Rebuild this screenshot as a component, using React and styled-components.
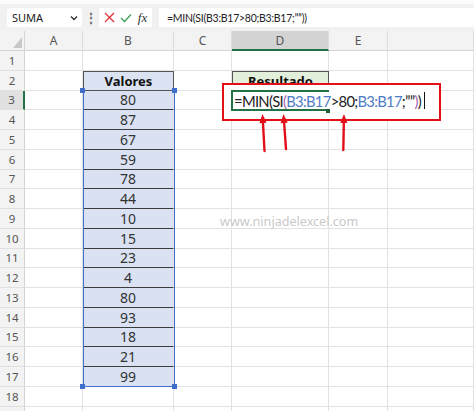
import React from 'react';
import styled, { createGlobalStyle } from 'styled-components';

const Global = createGlobalStyle`
  html, body { margin: 0; padding: 0; background: #fff; }
  body { width: 474px; height: 411px; overflow: hidden; font-family: "Noto Sans", "Open Sans", sans-serif; }
`;

const Page = styled.div`
  position: relative;
  width: 474px;
  height: 411px;
  overflow: hidden;
  background: #fff;
`;

const Toolbar = styled.div`
  height: 31px;
  box-sizing: border-box;
  border-top: 4px solid #fbfbfb;
  background: #f1f1f1;
  display: flex;
  align-items: center;
  padding-left: 7px;
`;

const NameBox = styled.div`
  width: 75px;
  height: 19px;
  box-sizing: border-box;
  background: #fff;
  border-radius: 3px;
  display: flex;
  align-items: center;
  justify-content: space-between;
  padding: 0 4px 0 5px;
  font-size: 11px;
  color: #222;
`;

const Dots = styled.div`
  width: 10px;
  margin-left: 4px;
  display: flex;
  justify-content: center;
  color: #666;
  font-size: 12px;
  font-weight: bold;
`;

const ActionBox = styled.div`
  width: 53px;
  height: 19px;
  margin-left: 3px;
  background: #fff;
  border-radius: 2px;
  display: flex;
  align-items: center;
  justify-content: space-around;
  padding: 0 2px;
  box-sizing: border-box;
`;

const Fx = styled.span`
  font-family: "Liberation Serif", "DejaVu Serif", serif;
  font-style: italic;
  font-size: 13px;
  color: #333;
`;

const FormulaInput = styled.div`
  flex: 1;
  height: 19px;
  margin-left: 7px;
  background: #fff;
  display: flex;
  align-items: center;
  padding-left: 8px;
  font-family: "Lato", "Noto Sans", sans-serif;
  font-size: 10.5px;
  letter-spacing: -0.25px;
  color: #222;
`;

const Sheet = styled.div`
  display: grid;
  grid-template-columns: 25px 58px 91px 58px 97px 59px 1fr;
  grid-template-rows: 20px repeat(19, 19.75px);
`;

const ColHead = styled.div`
  box-sizing: border-box;
  background: ${p => (p.$active ? '#d3d3d3' : '#f3f3f3')};
  border-right: 1px solid #dcdcdc;
  border-bottom: ${p => (p.$active ? '2px solid #217346' : '1px solid #d4d4d4')};
  display: flex;
  align-items: center;
  justify-content: center;
  font-size: 12px;
  color: #555;
`;

const Corner = styled.div`
  box-sizing: border-box;
  background: #f3f3f3;
  border-right: 1px solid #d4d4d4;
  border-bottom: 1px solid #d4d4d4;
  display: flex;
  align-items: flex-end;
  justify-content: flex-end;
  padding: 0 2px 2px 0;
`;

const RowHead = styled.div`
  box-sizing: border-box;
  background: ${p => (p.$active ? '#e1e1e1' : '#f3f3f3')};
  border-right: ${p => (p.$active ? '2px solid #217346' : '1px solid #d4d4d4')};
  border-bottom: 1px solid #e0e0e0;
  display: flex;
  align-items: center;
  justify-content: center;
  font-size: 11.5px;
  color: #555;
`;

const Cell = styled.div`
  box-sizing: border-box;
  border-right: 1px solid #e2e2e2;
  border-bottom: 1px solid #e2e2e2;
`;

const HeadCell = styled.div`
  box-sizing: border-box;
  background: ${p => p.$bg};
  border: 1.5px solid #555;
  display: flex;
  align-items: center;
  justify-content: center;
  font-size: 13px;
  font-weight: bold;
  color: #111;
`;

const DataCell = styled.div`
  box-sizing: border-box;
  background: #d9e1f2;
  border-bottom: 1.5px solid #3c3c3c;
  border-right: 1px solid #e2e2e2;
  display: flex;
  align-items: center;
  justify-content: center;
  font-size: 14px;
  color: #333;
`;

const Selection = styled.div`
  position: absolute;
  left: 82.5px;
  top: 90px;
  width: 92px;
  height: 297px;
  box-sizing: border-box;
  border-left: 1.5px solid #3f6fcb;
  border-right: 1.5px solid #3f6fcb;
  border-bottom: 1.5px solid #3f6fcb;
  pointer-events: none;
`;

const Handle = styled.div`
  position: absolute;
  width: 5px;
  height: 5px;
  background: #3f6fcb;
  ${p => (p.$top ? 'top: -2px;' : 'bottom: -3px;')}
  ${p => (p.$left ? 'left: -3.5px;' : 'right: -3.5px;')}
`;

const RedBox = styled.div`
  position: absolute;
  left: 222px;
  top: 83px;
  width: 219px;
  height: 38px;
  box-sizing: border-box;
  border: 2px solid #e3101a;
  background: #fff;
`;

const Editor = styled.div`
  position: absolute;
  left: 231px;
  top: 90.5px;
  width: 196px;
  height: 20px;
  display: flex;
  align-items: center;
  padding-left: 3px;
  box-sizing: border-box;
  font-family: "Lato", "Noto Sans", sans-serif;
  font-size: 14.8px;
  letter-spacing: -0.7px;
  color: #222;
  white-space: nowrap;
  background: #fff;
`;

const Tok = styled.span`
  color: ${p => p.$c || '#222'};
`;

const Caret = styled.span`
  display: inline-block;
  width: 1px;
  height: 17px;
  background: #111;
  margin-left: 3px;
`;

const ActiveCell = styled.div`
  position: absolute;
  left: 231px;
  top: 90px;
  width: 98px;
  height: 21px;
  box-sizing: border-box;
  border: 2px solid #217346;
  border-right: none;
  pointer-events: none;
`;

const FillHandle = styled.div`
  position: absolute;
  left: 326px;
  top: 108.5px;
  width: 4px;
  height: 4px;
  background: #1d5e3a;
`;

const Watermark = styled.div`
  position: absolute;
  left: 220px;
  top: 213px;
  font-size: 12.6px;
  color: #c9c9c9;
`;

const Arrows = styled.svg`
  position: absolute;
  left: 0;
  top: 0;
  pointer-events: none;
`;

const values = [80, 87, 67, 59, 78, 44, 10, 15, 23, 4, 80, 93, 18, 21, 99];
const cols = ['A', 'B', 'C', 'D', 'E', ''];

function Arrow({ x1, y1, x2, y2 }) {
  const dx = x1 - x2, dy = y1 - y2;
  const len = Math.hypot(dx, dy);
  const ux = dx / len, uy = dy / len;
  const bx = x1 - ux * 9, by = y1 - uy * 9;
  const px = -uy * 3.6, py = ux * 3.6;
  return (
    <g>
      <line x1={x2} y1={y2} x2={bx} y2={by} stroke="#e3101a" strokeWidth="2.4" strokeLinecap="round" />
      <polygon points={`${x1},${y1} ${bx + px},${by + py} ${bx - px},${by - py}`} fill="#e3101a" />
    </g>
  );
}

export default function App() {
  const rows = [];
  for (let r = 1; r <= 19; r++) {
    rows.push(<RowHead key={`rh${r}`} $active={r === 3}>{r <= 18 ? r : ''}</RowHead>);
    for (let c = 0; c < 6; c++) {
      const key = `c${r}-${c}`;
      if (c === 1 && r === 2) {
        rows.push(<HeadCell key={key} $bg="#dbe2f1">Valores</HeadCell>);
      } else if (c === 3 && r === 2) {
        rows.push(<HeadCell key={key} $bg="#e2efda">Resultado</HeadCell>);
      } else if (c === 1 && r >= 3 && r <= 17) {
        rows.push(<DataCell key={key}>{values[r - 3]}</DataCell>);
      } else {
        rows.push(<Cell key={key} />);
      }
    }
  }

  return (
    <Page>
      <Global />
      <Toolbar>
        <NameBox>
          <span>SUMA</span>
          <svg width="8" height="6" viewBox="0 0 8 6">
            <path d="M1 1.5 L4 4.5 L7 1.5" fill="none" stroke="#333" strokeWidth="1.4" />
          </svg>
        </NameBox>
        <Dots>⋮</Dots>
        <ActionBox>
          <svg width="11" height="11" viewBox="0 0 11 11">
            <path d="M1 1 L10 10 M10 1 L1 10" stroke="#e0343a" strokeWidth="1.3" />
          </svg>
          <svg width="12" height="10" viewBox="0 0 12 10">
            <path d="M1 5 L4.5 8.5 L11 1.5" fill="none" stroke="#3f9f5a" strokeWidth="1.3" />
          </svg>
          <Fx>fx</Fx>
        </ActionBox>
        <FormulaInput>=MIN(SI(B3:B17&gt;80;B3:B17;””))</FormulaInput>
      </Toolbar>
      <Sheet>
        <Corner>
          <svg width="9" height="11" viewBox="0 0 9 11">
            <polygon points="9,0 9,11 0,11" fill="#c8c8c8" />
          </svg>
        </Corner>
        {cols.map((c, i) => (
          <ColHead key={i} $active={c === 'D'}>{c}</ColHead>
        ))}
        {rows}
      </Sheet>

      <Selection>
        <Handle $top $left />
        <Handle $top />
        <Handle $left />
        <Handle />
      </Selection>

      <Watermark>www.ninjadelexcel.com</Watermark>

      <RedBox />
      <Editor>
        <Tok>=MIN(SI</Tok>
        <Tok $c="#a65fb3">(</Tok>
        <Tok $c="#4f7cc4">B3:B17</Tok>
        <Tok>&gt;80;</Tok>
        <Tok $c="#4f7cc4">B3:B17</Tok>
        <Tok>;””</Tok>
        <Tok $c="#a65fb3">)</Tok>
        <Tok>)</Tok>
        <Caret />
      </Editor>
      <ActiveCell />
      <FillHandle />

      <Arrows width="474" height="411" viewBox="0 0 474 411">
        <Arrow x1={262.5} y1={114} x2={264.5} y2={151} />
        <Arrow x1={283.5} y1={114} x2={286} y2={149} />
        <Arrow x1={344} y1={114} x2={343.3} y2={150} />
      </Arrows>
    </Page>
  );
}
